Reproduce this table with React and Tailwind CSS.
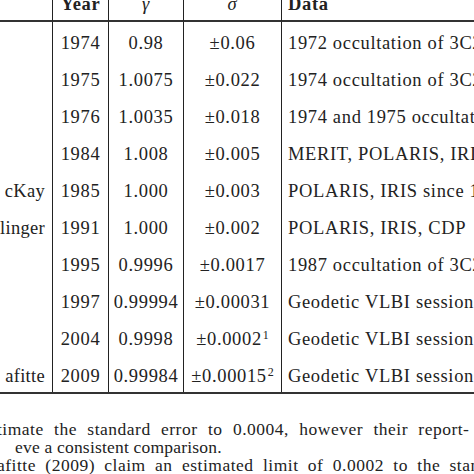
import React from 'react';

const rows = [
    { name: '', year: '1974', gamma: '0.98', sigma: '±0.06', data: '1972 occultation of 3C279' },
    { name: '', year: '1975', gamma: '1.0075', sigma: '±0.022', data: '1974 occultation of 3C279' },
    { name: '', year: '1976', gamma: '1.0035', sigma: '±0.018', data: '1974 and 1975 occultations of 3C279' },
    { name: '', year: '1984', gamma: '1.008', sigma: '±0.005', data: 'MERIT, POLARIS, IRIS' },
    { name: 'cKay', year: '1985', gamma: '1.000', sigma: '±0.003', data: 'POLARIS, IRIS since 1980' },
    { name: 'linger', year: '1991', gamma: '1.000', sigma: '±0.002', data: 'POLARIS, IRIS, CDP' },
    { name: '', year: '1995', gamma: '0.9996', sigma: '±0.0017', data: '1987 occultation of 3C279' },
    { name: '', year: '1997', gamma: '0.99994', sigma: '±0.00031', data: 'Geodetic VLBI sessions' },
    { name: '', year: '2004', gamma: '0.9998', sigma: '±0.0002', sup: '1', data: 'Geodetic VLBI sessions' },
    { name: 'afitte', year: '2009', gamma: '0.99984', sigma: '±0.00015', sup: '2', data: 'Geodetic VLBI sessions' },
];

const App = () => {
    return (
        <div className="w-[474px] h-[474px] overflow-hidden bg-white text-[#222] font-['Liberation_Serif',serif] text-[18.5px] tracking-[0.65px]">
            {/* table */}
            <div className="grid grid-cols-[52px_56px_75px_98px_1fr] border-b-2 border-[#333]">
                {/* header */}
                <div className="h-[22px] border-b-2 border-[#333]" />
                <div className="h-[22px] border-b-2 border-l border-[#333] border-l-[#222] flex justify-center">
                    <div className="leading-[20px] -mt-[6px] font-bold">Year</div>
                </div>
                <div className="h-[22px] border-b-2 border-l border-[#333] border-l-[#222] flex justify-center">
                    <div className="leading-[20px] -mt-[6px] italic">γ</div>
                </div>
                <div className="h-[22px] border-b-2 border-l border-[#333] border-l-[#222] flex justify-center">
                    <div className="leading-[20px] -mt-[6px] italic">σ</div>
                </div>
                <div className="h-[22px] border-b-2 border-l border-[#333] border-l-[#222] pl-[6px]">
                    <div className="leading-[20px] -mt-[6px] font-bold whitespace-nowrap">Data</div>
                </div>

                {/* body */}
                {rows.map((r) => (
                    <React.Fragment key={r.year}>
                        <div className="h-[37px] pt-[11px] pr-[7px] flex justify-end">
                            <div className="leading-[20px] whitespace-nowrap tracking-[0.3px]">{r.name}</div>
                        </div>
                        <div className="h-[37px] pt-[11px] border-l border-[#222] flex justify-center">
                            <div className="leading-[20px]">{r.year}</div>
                        </div>
                        <div className="h-[37px] pt-[11px] border-l border-[#222] flex justify-center">
                            <div className="leading-[20px]">{r.gamma}</div>
                        </div>
                        <div className="h-[37px] pt-[11px] border-l border-[#222] flex justify-center">
                            <div className="leading-[20px] whitespace-nowrap">
                                {r.sigma}
                                {r.sup && <sup className="text-[12px] tracking-normal ml-[1px]">{r.sup}</sup>}
                            </div>
                        </div>
                        <div className="h-[37px] pt-[11px] border-l border-[#222] pl-[6px]">
                            <div className="leading-[20px] whitespace-nowrap">{r.data}</div>
                        </div>
                    </React.Fragment>
                ))}
            </div>

            {/* footnotes */}
            <div className="mt-[26px] text-[17.5px] tracking-[0.5px] leading-[18px] whitespace-nowrap">
                <div className="-ml-[3px] [word-spacing:5.5px]">timate the standard error to 0.0004, however their report-</div>
                <div className="pl-[15px] tracking-[0.2px]">eve a consistent comparison.</div>
                <div className="-ml-[3px] [word-spacing:4.5px]">afitte (2009) claim an estimated limit of 0.0002 to the standard</div>
            </div>
        </div>
    );
};

export default App;
